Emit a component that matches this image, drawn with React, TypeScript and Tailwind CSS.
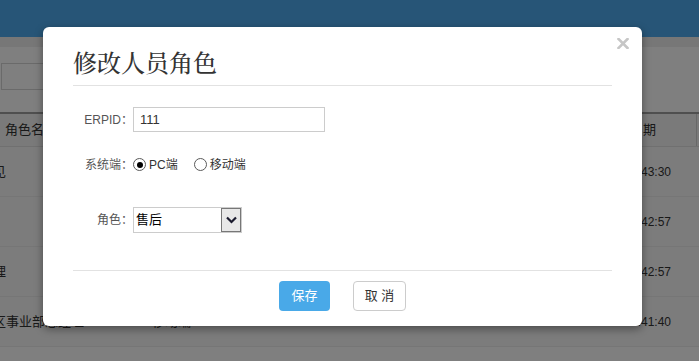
import React from 'react';

const rows = [
  { name: '提意见', client: 'PC端', time: '2018-05-22 10:43:30' },
  { name: '售后', client: 'PC端', time: '2018-05-22 10:42:57' },
  { name: '总经理', client: 'PC端', time: '2018-05-22 10:42:57' },
  { name: '华南区事业部总经理', client: '移动端', time: '2018-05-22 10:41:40' },
];

const Radio = ({ checked, label }: { checked?: boolean; label: string }) => (
  <label className="flex items-center">
    <span className="flex h-[13px] w-[13px] items-center justify-center rounded-full border border-[#5a5a5a] bg-white">
      {checked && <span className="h-[6px] w-[6px] rounded-full bg-black" />}
    </span>
    <span className="ml-[3px] text-[12px] text-[#333]">{label}</span>
  </label>
);

const App = () => {
  return (
    <div className="relative h-[361px] w-full overflow-hidden bg-white font-['Liberation_Sans','Noto_Sans_CJK_SC',sans-serif] text-[#333]">
      {/* page behind the modal */}
      <div className="h-[37px] bg-[#4eaaee]" />
      <div className="h-[10px] bg-[#eeeeee]" />
      <div className="pl-px pt-[16px]">
        <div className="h-[27px] w-[160px] border border-[#d4d4d4] bg-white" />
      </div>

      <div className="mt-[22px] border-t-2 border-[#9e9e9e]">
        <div className="flex h-[33px] items-center border-b border-[#e0e0e0] bg-[#f4f4f4] text-[13px]">
          <div className="w-[152px] shrink-0 pl-[5px]">角色名称</div>
          <div className="w-[400px] shrink-0">客户端</div>
          <div className="w-[104px] shrink-0 text-right">创建日期</div>
          <div className="ml-auto h-full w-[3px] border-l border-[#d0d0d0]" />
        </div>
        {rows.map((r) => (
          <div
            key={r.time + r.name}
            className="flex h-[50px] items-center border-b border-[#ececec] bg-[#f8f8f8] text-[13px] text-[#333]"
          >
            <div className="w-[152px] shrink-0 overflow-visible whitespace-nowrap">
              <span className="-ml-[33px] inline-block">{r.name}</span>
            </div>
            <div className="w-[400px] shrink-0">{r.client}</div>
            <div className="w-[119px] shrink-0 whitespace-nowrap text-right text-[12px]">{r.time}</div>
          </div>
        ))}
      </div>

      {/* overlay */}
      <div className="absolute inset-0 bg-black/50" />

      {/* modal */}
      <div className="absolute left-[43px] top-[27px] flex h-[299px] w-[599px] flex-col rounded-[6px] bg-white shadow-[0_3px_9px_rgba(0,0,0,0.4)]">
        <button className="absolute right-[13px] top-[11px] flex h-[11px] w-[12px] items-center justify-center">
          <svg width="12" height="11" viewBox="0 0 12 11">
            <path d="M1.5 1 L10.5 10 M10.5 1 L1.5 10" stroke="#c6c6c6" strokeWidth="2.6" strokeLinecap="square" />
          </svg>
        </button>

        <div className="mx-[30px] border-b border-[#e2e2e2] pb-[8px] pt-[20px]">
          <h4 className="font-['Noto_Serif_CJK_SC','Noto_Sans_CJK_SC',serif] text-[24px] font-medium leading-[30px] text-[#333]">
            修改人员角色
          </h4>
        </div>

        <div className="px-[30px] pt-[21px]">
          <div className="flex h-[25px] items-center">
            <div className="w-[60px] text-right text-[12px] text-[#555]">ERPID：</div>
            <div className="flex h-[25px] w-[192px] items-center border border-[#ccc] pl-[6px] text-[13px] text-[#333]">
              111
            </div>
          </div>

          <div className="mt-[20px] flex h-[25px] items-center">
            <div className="w-[60px] text-right text-[12px] text-[#555]">系统端：</div>
            <div className="flex items-center gap-[16px]">
              <Radio checked label="PC端" />
              <Radio label="移动端" />
            </div>
          </div>

          <div className="mt-[30px] flex h-[26px] items-center">
            <div className="w-[60px] text-right text-[12px] text-[#555]">角色：</div>
            <div className="flex h-[26px] w-[109px] items-stretch border border-[#ccc]">
              <div className="flex flex-1 items-center pl-[2px] text-[13px] text-black">售后</div>
              <div className="flex w-[20px] items-center justify-center border border-[#777] bg-[#e8e8e8]">
                <svg width="11" height="8" viewBox="0 0 11 8">
                  <path d="M1 1.5 L5.5 6 L10 1.5" fill="none" stroke="#1b1b2e" strokeWidth="2.2" />
                </svg>
              </div>
            </div>
          </div>
        </div>

        <div className="mx-[30px] mt-[37px] border-t border-[#e2e2e2]" />

        <div className="flex justify-center gap-[23px] pt-[10px]">
          <button className="h-[30px] w-[51px] rounded-[4px] bg-[#49a9e8] text-[13px] text-white">保存</button>
          <button className="h-[30px] w-[53px] rounded-[4px] border border-[#ccc] bg-white text-[13px] text-[#333]">
            取 消
          </button>
        </div>
      </div>
    </div>
  );
};

export default App;
